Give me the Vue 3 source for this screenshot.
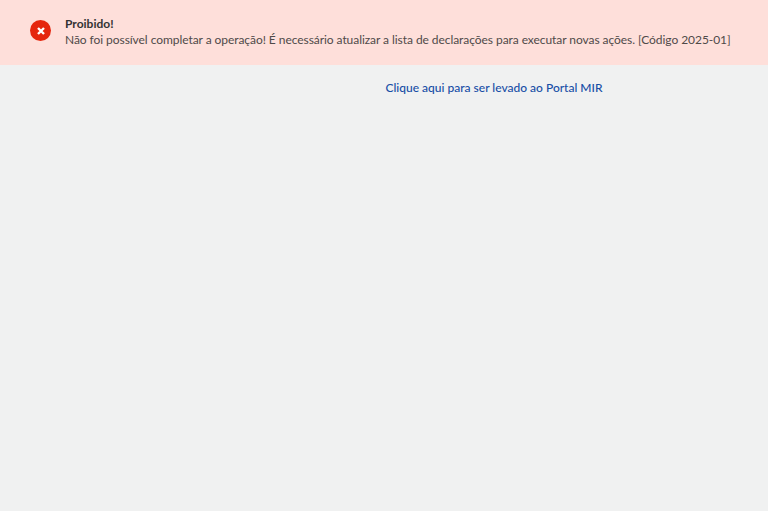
<template>
    <div class="page">
        <section class="alert">
            <span class="alert-icon">
                <svg viewBox="0 0 10 10" width="10" height="10">
                    <path d="M2 2 L8 8 M8 2 L2 8" stroke="#fff" stroke-width="2.4" fill="none" />
                </svg>
            </span>
            <div class="alert-text">
                <strong>Proibido!</strong>
                <p>Não foi possível completar a operação! É necessário atualizar a lista de declarações para executar novas ações. [Código 2025-01]</p>
            </div>
        </section>
        <main class="content">
            <a href="#" class="portal-link">Clique aqui para ser levado ao Portal MIR</a>
        </main>
    </div>
</template>

<script setup>
</script>

<style scoped>
.page {
  min-height: 511px;
  background-color: #f0f1f1;
  font-family: Lato, "Open Sans", sans-serif;
  font-size: 12px;
}

.alert {
  height: 65px;
  box-sizing: border-box;
  padding: 0 0 4px 30px;
  display: flex;
  align-items: center;
  gap: 14px;
  background-color: #fedfda;
  color: #4f4a49;
}

.alert-icon {
  width: 21px;
  height: 21px;
  flex: none;
  border-radius: 50%;
  background-color: #e5260e;
  display: flex;
  align-items: center;
  justify-content: center;
}

.alert-text {
  display: flex;
  flex-direction: column;
  gap: 3px;
  padding-top: 2px;
  line-height: 13px;
  white-space: nowrap;
}

.alert-text strong {
  color: #333;
  font-weight: 700;
}

.alert-text p {
  margin: 0;
  letter-spacing: -0.06px;
}

.content {
  padding: 16px 0 0 220px;
  text-align: center;
  line-height: 14px;
}

.portal-link {
  color: #174ea6;
  font-weight: 500;
  text-decoration: none;
}
</style>

<style>
html, body {
  background-color: #f0f1f1;
}
</style>
